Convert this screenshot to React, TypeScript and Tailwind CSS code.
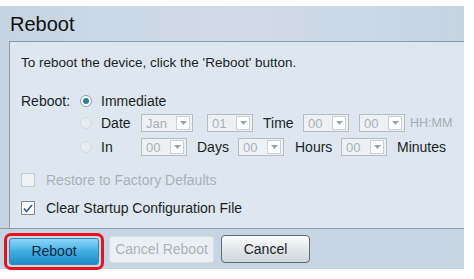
import React from "react";

function Select({ value, w }: { value: string; w: string }) {
  return (
    <div className={`${w} h-[18px] flex items-center border border-[#b4bcc4] bg-[#eef1f4] pl-[4px] pr-[2px]`}>
      <span className="flex-1 text-[13px] leading-none text-[#a9b1b9]">{value}</span>
      <span className="w-[14px] h-[14px] flex items-center justify-center border border-[#c9d0d6] bg-white">
        <svg width="7" height="4" viewBox="0 0 7 4">
          <path d="M0 0h7L3.5 4z" fill="#9aa3ab" />
        </svg>
      </span>
    </div>
  );
}

function Radio({ checked }: { checked?: boolean }) {
  return checked ? (
    <span className="w-[12px] h-[12px] rounded-full border border-[#8f9ba6] bg-white flex items-center justify-center">
      <span className="w-[6px] h-[6px] rounded-full bg-[#2b7f98]" />
    </span>
  ) : (
    <span className="w-[12px] h-[12px] rounded-full border border-[#d3dae0] bg-[#e6ebf0]" />
  );
}

export default function App() {
  return (
    <div className="w-[474px] h-[279px] bg-white pt-[6px] text-[#1a1f25]" style={{ fontFamily: '"Liberation Sans", Arial, sans-serif' }}>
      <div className="w-[464px] bg-gradient-to-r from-[#c6d4e2] via-[#cfdbe7] to-[#c6d4e2]">
        <h1 className="h-[35px] pl-[10px] flex items-center text-[20px] text-[#111]">Reboot</h1>

        <div className="ml-[9px] h-[187px] border-t border-l border-[#8e9dab] bg-[#dee7f0] pl-[11px] pt-[13px]">
          <p className="text-[13.5px] leading-[16px]">To reboot the device, click the 'Reboot' button.</p>

          <div className="mt-[20px] text-[14px]">
            <div className="h-[20px] flex items-center">
              <span className="w-[59px]">Reboot:</span>
              <Radio checked />
              <span className="ml-[9px]">Immediate</span>
            </div>
            <div className="h-[24px] flex items-center">
              <span className="w-[59px]" />
              <Radio />
              <span className="ml-[9px] w-[40px]">Date</span>
              <Select value="Jan" w="w-[52px]" />
              <span className="w-[14px]" />
              <Select value="01" w="w-[46px]" />
              <span className="ml-[10px] w-[40px]">Time</span>
              <Select value="00" w="w-[46px]" />
              <span className="w-[10px]" />
              <Select value="00" w="w-[46px]" />
              <span className="ml-[5px] text-[12.5px] text-[#a5adb5]">HH:MM</span>
            </div>
            <div className="h-[24px] flex items-center">
              <span className="w-[59px]" />
              <Radio />
              <span className="ml-[9px] w-[40px]">In</span>
              <Select value="00" w="w-[46px]" />
              <span className="ml-[10px] w-[41px]">Days</span>
              <Select value="00" w="w-[46px]" />
              <span className="ml-[11px] w-[46px]">Hours</span>
              <Select value="00" w="w-[46px]" />
              <span className="ml-[10px]">Minutes</span>
            </div>
          </div>

          <div className="mt-[11px] h-[20px] flex items-center text-[14px]">
            <span className="w-[14px] h-[14px] border border-[#c3ccd4] bg-[#eef2f5]" />
            <span className="ml-[11px] text-[#a8b1ba]">Restore to Factory Defaults</span>
          </div>
          <div className="mt-[8px] h-[20px] flex items-center text-[14px]">
            <span className="w-[14px] h-[14px] border border-[#7d8b98] bg-white flex items-center justify-center">
              <svg width="10" height="9" viewBox="0 0 10 9">
                <path d="M1 4.5l2.5 3L9 1" fill="none" stroke="#2f5f9a" strokeWidth="1.6" />
              </svg>
            </span>
            <span className="ml-[11px]">Clear Startup Configuration File</span>
          </div>
        </div>

        <div className="h-[41px] border-t border-[#8e9dab] bg-[#c7d5e2] flex items-center pl-[4px] gap-[5px]">
          <div className="rounded-[7px] border-[3px] border-[#e3141e] p-[2px] -mb-[4px] mt-[1px]">
            <button className="w-[90px] h-[27px] rounded-[3px] border border-[#3a86b3] bg-gradient-to-b from-[#8ad6f6] via-[#3eaee2] to-[#1c8cc6] text-[14px] text-[#13263e]">
              Reboot
            </button>
          </div>
          <button className="w-[105px] h-[27px] rounded-[3px] border border-[#d7dee4] bg-[#eaeff3] text-[14px] text-[#aab3bc]">
            Cancel Reboot
          </button>
          <button className="ml-[2px] w-[89px] h-[28px] rounded-[4px] border border-[#5f6b76] bg-gradient-to-b from-[#fbfcfd] to-[#cdd4da] text-[14px] text-[#1d2228]">
            Cancel
          </button>
        </div>
      </div>
    </div>
  );
}
